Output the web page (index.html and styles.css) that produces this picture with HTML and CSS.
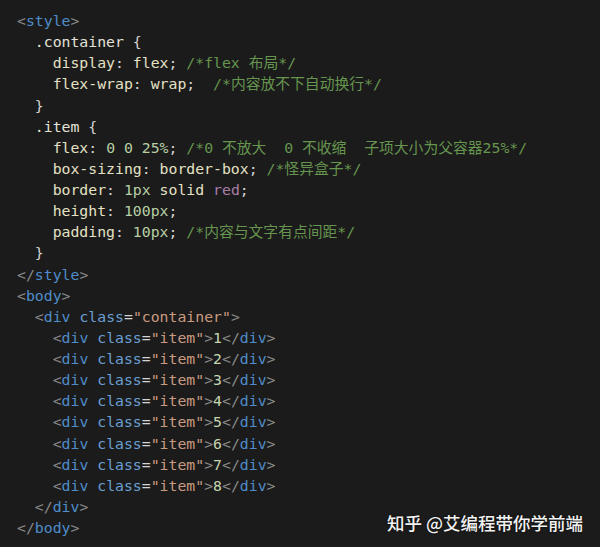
FILE: index.html
```html
<!DOCTYPE html>
<html>
<head>
<meta charset="utf-8">
<link rel="stylesheet" href="styles.css">
</head>
<body>
<div class="editor">
<pre class="code"><span class="p">&lt;</span><span class="t">style</span><span class="p">&gt;</span>
  <span class="s">.container</span> <span class="w">{</span>
    <span class="k">display</span><span class="w">:</span> <span class="v">flex</span><span class="w">;</span> <span class="c">/*flex 布局*/</span>
    <span class="k">flex-wrap</span><span class="w">:</span> <span class="v">wrap</span><span class="w">;</span>  <span class="c">/*内容放不下自动换行*/</span>
  <span class="w">}</span>
  <span class="s">.item</span> <span class="w">{</span>
    <span class="k">flex</span><span class="w">:</span> <span class="n">0 0 25%</span><span class="w">;</span> <span class="c">/*0 不放大  0 不收缩  子项大小为父容器25%*/</span>
    <span class="k">box-sizing</span><span class="w">:</span> <span class="v">border-box</span><span class="w">;</span> <span class="c">/*怪异盒子*/</span>
    <span class="k">border</span><span class="w">:</span> <span class="n">1px</span> <span class="v">solid</span> <span class="r">red</span><span class="w">;</span>
    <span class="k">height</span><span class="w">:</span> <span class="n">100px</span><span class="w">;</span>
    <span class="k">padding</span><span class="w">:</span> <span class="n">10px</span><span class="w">;</span> <span class="c">/*内容与文字有点间距*/</span>
  <span class="w">}</span>
<span class="p">&lt;/</span><span class="t">style</span><span class="p">&gt;</span>
<span class="p">&lt;</span><span class="t">body</span><span class="p">&gt;</span>
  <span class="p">&lt;</span><span class="t">div</span> <span class="a">class</span><span class="w">=</span><span class="q">"container"</span><span class="p">&gt;</span>
    <span class="p">&lt;</span><span class="t">div</span> <span class="a">class</span><span class="w">=</span><span class="q">"item"</span><span class="p">&gt;</span><span class="x">1</span><span class="p">&lt;/</span><span class="t">div</span><span class="p">&gt;</span>
    <span class="p">&lt;</span><span class="t">div</span> <span class="a">class</span><span class="w">=</span><span class="q">"item"</span><span class="p">&gt;</span><span class="x">2</span><span class="p">&lt;/</span><span class="t">div</span><span class="p">&gt;</span>
    <span class="p">&lt;</span><span class="t">div</span> <span class="a">class</span><span class="w">=</span><span class="q">"item"</span><span class="p">&gt;</span><span class="x">3</span><span class="p">&lt;/</span><span class="t">div</span><span class="p">&gt;</span>
    <span class="p">&lt;</span><span class="t">div</span> <span class="a">class</span><span class="w">=</span><span class="q">"item"</span><span class="p">&gt;</span><span class="x">4</span><span class="p">&lt;/</span><span class="t">div</span><span class="p">&gt;</span>
    <span class="p">&lt;</span><span class="t">div</span> <span class="a">class</span><span class="w">=</span><span class="q">"item"</span><span class="p">&gt;</span><span class="x">5</span><span class="p">&lt;/</span><span class="t">div</span><span class="p">&gt;</span>
    <span class="p">&lt;</span><span class="t">div</span> <span class="a">class</span><span class="w">=</span><span class="q">"item"</span><span class="p">&gt;</span><span class="x">6</span><span class="p">&lt;/</span><span class="t">div</span><span class="p">&gt;</span>
    <span class="p">&lt;</span><span class="t">div</span> <span class="a">class</span><span class="w">=</span><span class="q">"item"</span><span class="p">&gt;</span><span class="x">7</span><span class="p">&lt;/</span><span class="t">div</span><span class="p">&gt;</span>
    <span class="p">&lt;</span><span class="t">div</span> <span class="a">class</span><span class="w">=</span><span class="q">"item"</span><span class="p">&gt;</span><span class="x">8</span><span class="p">&lt;/</span><span class="t">div</span><span class="p">&gt;</span>
  <span class="p">&lt;/</span><span class="t">div</span><span class="p">&gt;</span>
<span class="p">&lt;/</span><span class="t">body</span><span class="p">&gt;</span></pre>
<div class="watermark">知乎 @艾编程带你学前端</div>
</div>
</body>
</html>
```
FILE: styles.css
```css
html, body {
  margin: 0;
  padding: 0;
  background: #1b1b1b;
}
.editor {
  position: relative;
  width: 600px;
  height: 547px;
  overflow: hidden;
  background: #1b1b1b;
}
.code {
  margin: 0;
  padding: 10px 0 0 17px;
  font-family: "DejaVu Sans Mono", "Noto Sans CJK SC", monospace;
  font-size: 14.8px;
  line-height: 21.13px;
  color: #d4d4d4;
  white-space: pre;
}
.p { color: #8a8a8a; }
.t { color: #4f8cc9; }
.a { color: #6a9fd4; }
.q { color: #c99a80; }
.x { color: #c6d6b0; }
.s { color: #e2e2d8; }
.w { color: #d4d4d4; }
.k { color: #e4e1c4; }
.v { color: #e4e1c4; }
.n { color: #b7cfa4; }
.r { color: #a97ea8; }
.c { color: #66954f; }
.watermark {
  position: absolute;
  right: 17px;
  bottom: 13px;
  font-family: "Noto Sans CJK SC", "Noto Sans", sans-serif;
  font-size: 17.5px;
  font-weight: 500;
  line-height: 22px;
  color: #f2f2f2;
  text-shadow: 0 0 2px rgba(0,0,0,0.8);
}
```
